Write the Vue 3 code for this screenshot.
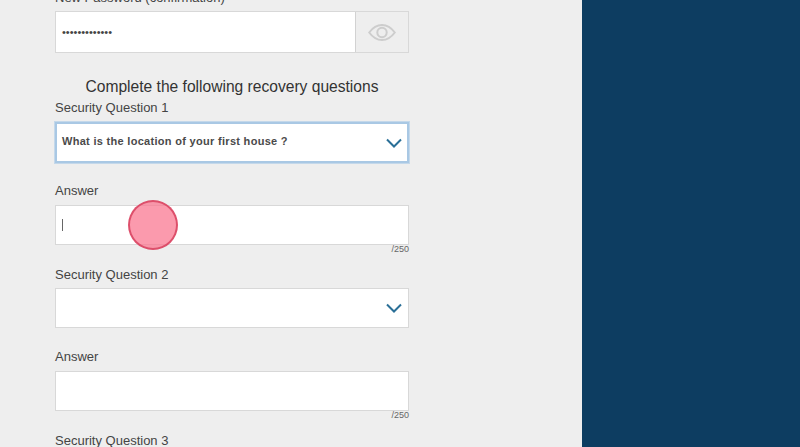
<script setup>
const maxLength = 250;
</script>

<template>
  <div class="page">
    <main class="pane">
      <form class="form">
        <label class="label">New Password (confirmation)</label>
        <div class="password-row">
          <div class="password-value">•••••••••••••</div>
          <div class="eye-box">
            <svg width="28" height="17" viewBox="0 0 28 17" fill="none" stroke="#cdcdcd">
              <path d="M1.200 8.500C5 3.300 9 1 14 1s9 2.300 12.800 7.500C23 13.700 19 16 14 16S5 13.700 1.200 8.500Z" stroke-width="2" />
              <circle cx="14" cy="8.500" r="4.700" stroke-width="2" />
            </svg>
          </div>
        </div>

        <h2 class="heading">Complete the following recovery questions</h2>

        <label class="label">Security Question 1</label>
        <div class="select focused">
          <span class="select-text">What is the location of your first house ?</span>
          <svg class="chevron" width="16" height="10" viewBox="0 0 16 10" fill="none">
            <path d="M1 1.500 8 8.500l7-7" stroke="#2a6f97" stroke-width="2" />
          </svg>
        </div>

        <label class="label answer-label">Answer</label>
        <div class="input">
          <span class="caret"></span>
          <span class="touch"></span>
        </div>
        <div class="counter">/{{ maxLength }}</div>

        <label class="label question-label">Security Question 2</label>
        <div class="select">
          <svg class="chevron" width="16" height="10" viewBox="0 0 16 10" fill="none">
            <path d="M1 1.500 8 8.500l7-7" stroke="#2a6f97" stroke-width="2" />
          </svg>
        </div>

        <label class="label answer-label second">Answer</label>
        <div class="input"></div>
        <div class="counter">/{{ maxLength }}</div>

        <label class="label question-label">Security Question 3</label>
      </form>
    </main>
    <aside class="side"></aside>
  </div>
</template>

<style scoped>
.page {
  display: flex;
  width: 800px;
  height: 447px;
  overflow: hidden;
  font-family: "Liberation Sans", Arial, sans-serif;
  color: #333;
}

.pane {
  width: 582px;
  height: 447px;
  background: #eeeeee;
  box-sizing: border-box;
  padding-left: 55px;
  overflow: hidden;
}

.side {
  flex: 1;
  background: #0d3d61;
}

.form {
  display: flex;
  flex-direction: column;
  width: 354px;
  margin-top: -10px;
}

.label {
  display: block;
  font-size: 13px;
  line-height: 16px;
  color: #444;
}

.password-row {
  display: flex;
  height: 42px;
  margin-top: 5px;
  border: 1px solid #d8d8d8;
  box-sizing: border-box;
}

.password-value {
  flex: 1;
  background: #fff;
  padding-left: 6px;
  font-size: 11px;
  line-height: 40px;
  color: #444;
}

.eye-box {
  width: 52px;
  display: flex;
  align-items: center;
  justify-content: center;
  border-left: 1px solid #d2d2d2;
}

.heading {
  margin: 24px 0 3px;
  text-align: center;
  font-size: 15.6px;
  line-height: 20px;
  font-weight: 400;
  color: #333;
}

.select {
  display: flex;
  align-items: center;
  height: 40px;
  margin-top: 5px;
  padding: 0 6px;
  background: #fff;
  border: 1px solid #d8d8d8;
  box-sizing: border-box;
}

.select.focused {
  height: 41px;
  margin-top: 6px;
  padding: 0 5px;
  border: 2px solid #a9c8e4;
  box-shadow: 0 0 0 1px #c4d8ea;
}

.select-text {
  padding-bottom: 4px;
  font-size: 11px;
  font-weight: 700;
  color: #4a4a4a;
  letter-spacing: 0.3px;
}

.chevron {
  margin-left: auto;
}

.answer-label {
  margin-top: 20px;
}

.answer-label.second {
  margin-top: 21px;
}

.input {
  position: relative;
  height: 40px;
  margin-top: 6px;
  background: #fff;
  border: 1px solid #d8d8d8;
  box-sizing: border-box;
}

.caret {
  position: absolute;
  left: 6px;
  top: 13px;
  width: 1px;
  height: 12px;
  background: #666;
}

.touch {
  position: absolute;
  left: 72px;
  top: -6px;
  width: 50px;
  height: 50px;
  box-sizing: border-box;
  border: 2px solid rgba(214, 60, 90, 0.8);
  border-radius: 50%;
  background: rgba(250, 120, 145, 0.75);
}

.counter {
  height: 10px;
  margin-top: -1px;
  text-align: right;
  font-size: 9px;
  line-height: 10px;
  color: #666;
}

.question-label {
  margin-top: 13px;
}
</style>
